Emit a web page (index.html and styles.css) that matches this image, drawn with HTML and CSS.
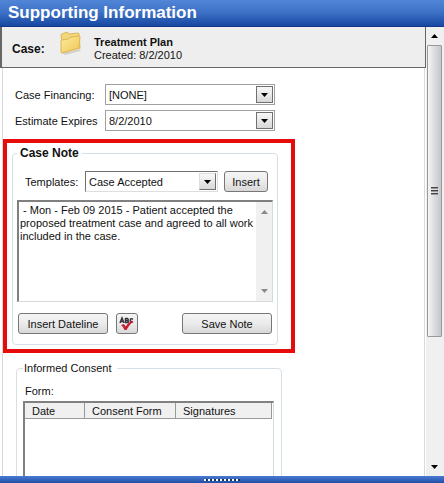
FILE: index.html
```html
<!DOCTYPE html>
<html lang="en">
<head>
<meta charset="utf-8">
<title>Supporting Information</title>
<link rel="stylesheet" href="styles.css">
</head>
<body>
<div class="app">
  <h1 class="titlebar">Supporting Information</h1>
  <div class="body">
    <main class="panel">
      <header class="case">
        <span class="case-label">Case:</span>
        <svg class="folder" width="24" height="26" viewBox="0 0 24 26" aria-hidden="true">
          <defs>
            <linearGradient id="front" x1="0" y1="0" x2="1" y2="1">
              <stop offset="0" stop-color="#fdeaa0"/>
              <stop offset="1" stop-color="#f0c654"/>
            </linearGradient>
          </defs>
          <path d="M3 22L22 18L21 20L6 24Z" fill="#d2cfc8"/>
          <path d="M2 4Q2 3 3 3L8 1L10 3L19 2Q20 2 20 3L21 17L4 21Z" fill="#f3d77c" stroke="#d9b65c" stroke-width="1"/>
          <path d="M2 10Q2 9 3 9L9 8L12 6L20 5Q21 5 21 6L20 17L3 22Q2 22 2 21Z" fill="url(#front)" stroke="#dcb752" stroke-width="1"/>
        </svg>
        <div class="case-text">
          <h2>Treatment Plan</h2>
          <p>Created: 8/2/2010</p>
        </div>
      </header>
      <div class="content">
        <div class="fields">
          <label for="financing">Case Financing:</label>
          <span class="combo">
            <select id="financing"><option>[NONE]</option></select>
            <span class="drop"><svg width="7" height="4" viewBox="0 0 7 4"><path d="M0 0H7L3.500 4Z"/></svg></span>
          </span>
          <label for="expires">Estimate Expires</label>
          <span class="combo">
            <select id="expires"><option>8/2/2010</option></select>
            <span class="drop"><svg width="7" height="4" viewBox="0 0 7 4"><path d="M0 0H7L3.500 4Z"/></svg></span>
          </span>
        </div>
        <section class="highlight">
          <fieldset class="group note">
            <legend class="strong">Case Note</legend>
            <div class="templates">
              <label for="templates">Templates:</label>
              <span class="combo sunken">
                <select id="templates"><option>Case Accepted</option></select>
                <span class="drop"><svg width="7" height="4" viewBox="0 0 7 4"><path d="M0 0H7L3.500 4Z"/></svg></span>
              </span>
              <button type="button" class="insert">Insert</button>
            </div>
            <div class="memo">
              <textarea aria-label="Case note"> - Mon - Feb 09 2015 - Patient accepted the proposed treatment case and agreed to all work included in the case.</textarea>
              <div class="memo-scroll">
                <svg width="7" height="4" viewBox="0 0 7 4"><path d="M0 4H7L3.500 0Z"/></svg>
                <svg width="7" height="4" viewBox="0 0 7 4"><path d="M0 0H7L3.500 4Z"/></svg>
              </div>
            </div>
            <div class="actions">
              <button type="button" class="wide">Insert Dateline</button>
              <button type="button" class="spell" aria-label="Check spelling">
                <svg width="16" height="16" viewBox="0 0 16 16" aria-hidden="true">
                  <g fill="none" stroke="#3a3038" stroke-width="1.500">
                    <path d="M1 7L3 2L5 7M2 5.500H4.500"/>
                    <path d="M6.500 2V7M6 2.500H8.500Q10 3.500 8.500 4.500H7M8.500 4.500Q10.500 5.500 8.500 6.500H6"/>
                    <path d="M14 3.300Q11.500 1.500 11.300 4.500Q11.500 7.500 14 5.700"/>
                  </g>
                  <path d="M2 9L5 8L6.500 10.500Q9 6.500 13 4.500L14 5.500Q10 9 7.500 14H5.500Q4.500 11 2 9Z" fill="#c71f32"/>
                </svg>
              </button>
              <button type="button" class="wide save">Save Note</button>
            </div>
          </fieldset>
        </section>
        <fieldset class="group consent">
          <legend>Informed Consent</legend>
          <p class="form-label" id="form-label">Form:</p>
          <div class="list">
            <table aria-labelledby="form-label">
              <thead>
                <tr><th class="col-date">Date</th><th class="col-form">Consent Form</th><th>Signatures</th></tr>
              </thead>
            </table>
          </div>
        </fieldset>
      </div>
    </main>
    <div class="scrollbar">
      <svg width="7" height="4" viewBox="0 0 7 4"><path d="M0 4H7L3.500 0Z"/></svg>
      <div class="thumb"><i></i><i></i><i></i></div>
      <svg width="7" height="4" viewBox="0 0 7 4"><path d="M0 0H7L3.500 4Z"/></svg>
    </div>
  </div>
  <footer class="splitter"><span class="grip"></span></footer>
</div>
</body>
</html>
```
FILE: styles.css
```css
* {
  box-sizing: border-box;
}

body {
  margin: 0;
  background: #fff;
  color: #111;
  font: 11px/14px "Liberation Sans", Arial, sans-serif;
}

h1, h2, p {
  margin: 0;
  font-size: inherit;
}

select, button, textarea {
  margin: 0;
  color: inherit;
  font: inherit;
}

.app {
  display: grid;
  grid-template-rows: auto 1fr auto;
  height: 100vh;
  overflow: hidden;
}

.titlebar {
  padding: 0 8px;
  border-bottom: 1px solid #123a8c;
  background: linear-gradient(#5185d6, #3f73c8 45%, #1747a2);
  color: #fff;
  font-size: 17px;
  line-height: 26px;
}

.body {
  display: flex;
  min-height: 0;
}

.panel {
  display: flex;
  flex: 1;
  flex-direction: column;
  min-width: 0;
}

.case {
  display: flex;
  flex: none;
  align-items: center;
  height: 41px;
  padding-left: 10px;
  border: 1px solid #666;
  border-left-width: 2px;
  border-top: 0;
  background: #eee;
}

.case-label {
  width: 47px;
  padding-top: 4px;
  font-size: 12px;
  font-weight: bold;
}

.folder {
  margin-bottom: 6px;
}

.case-text {
  padding: 4px 0 0 11px;
  line-height: 13px;
}

.content {
  flex: 1;
  min-height: 0;
  margin: 0 1px 0 2px;
  overflow: hidden;
  border: solid #d5dadd;
  border-width: 0 1px;
}

.fields {
  display: grid;
  grid-template-columns: 90px minmax(0, 170px);
  row-gap: 5px;
  align-items: center;
  padding: 16px 0 8px 12px;
}

.combo {
  display: block;
  position: relative;
  height: 21px;
  border: 1px solid #a0a0a0;
}

.combo select {
  width: 100%;
  height: 100%;
  padding: 0 20px 0 3px;
  border: 0;
  background: #fff;
  appearance: none;
}

.drop {
  display: grid;
  position: absolute;
  top: 1px;
  right: 1px;
  bottom: 1px;
  width: 17px;
  place-items: center;
  border: 1px solid #707070;
  background: linear-gradient(#f8f8f8, #d8d8d8);
  pointer-events: none;
}

.highlight {
  max-width: 292px;
  padding: 3px 13px 4px 5px;
  border: 4px solid #e60c0c;
}

.group {
  min-width: 0;
  margin: 0;
  border: 1px solid #d5dfe5;
  border-radius: 4px;
}

.group legend {
  padding: 0 6px 0 1px;
}

.group .strong {
  padding: 0 3px;
  font-size: 12px;
  font-weight: bold;
}

.note {
  padding: 11px 4px 10px;
}

.templates {
  display: flex;
  align-items: center;
  padding: 0 5px 0 8px;
}

.templates label {
  width: 60px;
}

.templates .combo {
  flex: 1;
  margin-right: 6px;
}

.sunken {
  border-color: #707070 #ddd #ddd #707070;
}

.sunken .drop {
  border-color: #ddd #707070 #707070 #ddd;
}

button {
  height: 21px;
  padding: 0 5px;
  border: 1px solid #777;
  border-radius: 3px;
  background: linear-gradient(#f5f5f5, #ebebeb 50%, #d8d8d8);
}

.insert {
  width: 44px;
}

.memo {
  display: flex;
  height: 102px;
  margin-top: 8px;
  border: 1px solid #d5dadd;
  border-top: 2px solid #808080;
  border-left: 2px solid #808080;
}

.memo textarea {
  flex: 1;
  min-width: 0;
  padding: 2px 0 0 1px;
  overflow: hidden;
  border: 0;
  outline: 0;
  background: #fff;
  line-height: 13px;
  resize: none;
}

.memo-scroll {
  display: flex;
  flex-direction: column;
  align-items: center;
  justify-content: space-between;
  width: 16px;
  padding: 8px 0;
  background: #f0f0f0;
  fill: #888;
}

.actions {
  display: flex;
  gap: 8px;
  padding: 11px 1px 0;
}

.wide {
  width: 90px;
}

.spell {
  display: grid;
  width: 22px;
  padding: 0;
  place-items: center;
}

.save {
  margin-left: auto;
}

.consent {
  max-width: 266px;
  height: 200px;
  margin: 8px 0 0 13px;
  padding: 8px 7px 0 6px;
}

.form-label {
  padding: 1px 0 3px 2px;
}

.list {
  height: 160px;
  border: 1px solid #d5dadd;
  border-top: 2px solid #808080;
  border-left: 2px solid #808080;
}

table {
  width: calc(100% - 1px);
  border-collapse: separate;
  border-spacing: 0;
  table-layout: fixed;
}

th {
  padding: 1px 0 0 7px;
  border: 1px solid #999;
  border-top: 0;
  border-left: 0;
  background: #f0f0f0;
  font-weight: normal;
  text-align: left;
}

.col-date {
  width: 60px;
}

.col-form {
  width: 91px;
}

.scrollbar {
  display: flex;
  flex-direction: column;
  align-items: center;
  width: 18px;
  padding: 7px 2px 7px 0;
  background: #f0f0f0;
}

.thumb {
  display: flex;
  flex-direction: column;
  flex: none;
  align-items: center;
  justify-content: center;
  gap: 1px;
  width: 15px;
  height: 292px;
  margin: 7px 0 auto;
  border: 1px solid #999;
  border-radius: 1px;
  background: linear-gradient(90deg, #f5f5f5, #dcdcdf 50%, #c5c6ca);
}

.thumb i {
  width: 7px;
  height: 2px;
  border-bottom: 1px solid #999;
  background: #444;
}

.splitter {
  display: grid;
  height: 7px;
  place-items: center;
  background: linear-gradient(#4a7bd0, #1f4fa8);
}

.grip {
  width: 36px;
  height: 2px;
  background: repeating-linear-gradient(90deg, #fff 0 2px, #16346f 2px 4px);
}
```
